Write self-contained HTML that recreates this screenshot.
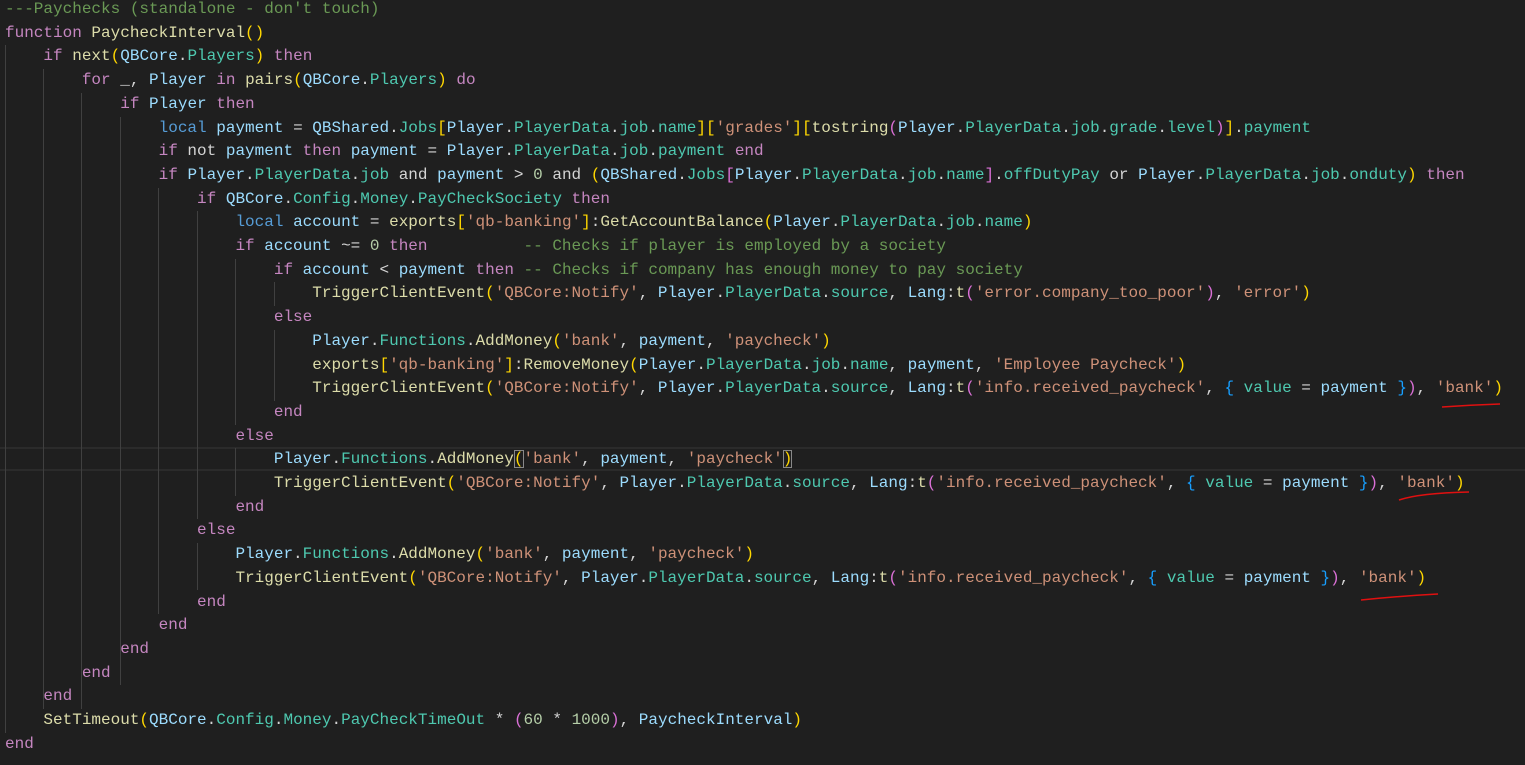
<!DOCTYPE html>
<html><head><meta charset="utf-8"><style>
html,body{margin:0;padding:0;background:#1f1f1f;width:1525px;height:765px;overflow:hidden}
#ed{position:absolute;left:5px;top:-2px;font-family:"Liberation Mono",monospace;font-size:16px;line-height:23.7px;color:#d4d4d4;white-space:pre}
.k{color:#c586c0}.l{color:#569cd6}.f{color:#dcdcaa}.v{color:#9cdcfe}.p{color:#4ec9b0}.s{color:#ce9178}.c{color:#6a9955}.n{color:#b5cea8}
.b1{color:#ffd700}.b2{color:#da70d6}.b3{color:#179fff}
.g{position:absolute;width:1px;background:#404040}
.cur{position:absolute;left:0;width:1525px;height:20px;border-top:2px solid #2b2b2b;border-bottom:2px solid #2b2b2b}
.m{outline:1px solid #888;outline-offset:-1px}
</style></head><body>
<div class="cur" style="top:446.5px"></div>
<div id="ed"><span class="c">---Paychecks (standalone - don't touch)</span>
<span class="k">function</span> <span class="f">PaycheckInterval</span><span class="b1">()</span>
    <span class="k">if</span> <span class="f">next</span><span class="b1">(</span><span class="v">QBCore</span>.<span class="p">Players</span><span class="b1">)</span> <span class="k">then</span>
        <span class="k">for</span> _, <span class="v">Player</span> <span class="k">in</span> <span class="f">pairs</span><span class="b1">(</span><span class="v">QBCore</span>.<span class="p">Players</span><span class="b1">)</span> <span class="k">do</span>
            <span class="k">if</span> <span class="v">Player</span> <span class="k">then</span>
                <span class="l">local</span> <span class="v">payment</span> = <span class="v">QBShared</span>.<span class="p">Jobs</span><span class="b1">[</span><span class="v">Player</span>.<span class="p">PlayerData</span>.<span class="p">job</span>.<span class="p">name</span><span class="b1">][</span><span class="s">'grades'</span><span class="b1">][</span><span class="f">tostring</span><span class="b2">(</span><span class="v">Player</span>.<span class="p">PlayerData</span>.<span class="p">job</span>.<span class="p">grade</span>.<span class="p">level</span><span class="b2">)</span><span class="b1">]</span>.<span class="p">payment</span>
                <span class="k">if</span> not <span class="v">payment</span> <span class="k">then</span> <span class="v">payment</span> = <span class="v">Player</span>.<span class="p">PlayerData</span>.<span class="p">job</span>.<span class="p">payment</span> <span class="k">end</span>
                <span class="k">if</span> <span class="v">Player</span>.<span class="p">PlayerData</span>.<span class="p">job</span> and <span class="v">payment</span> &gt; <span class="n">0</span> and <span class="b1">(</span><span class="v">QBShared</span>.<span class="p">Jobs</span><span class="b2">[</span><span class="v">Player</span>.<span class="p">PlayerData</span>.<span class="p">job</span>.<span class="p">name</span><span class="b2">]</span>.<span class="p">offDutyPay</span> or <span class="v">Player</span>.<span class="p">PlayerData</span>.<span class="p">job</span>.<span class="p">onduty</span><span class="b1">)</span> <span class="k">then</span>
                    <span class="k">if</span> <span class="v">QBCore</span>.<span class="p">Config</span>.<span class="p">Money</span>.<span class="p">PayCheckSociety</span> <span class="k">then</span>
                        <span class="l">local</span> <span class="v">account</span> = <span class="f">exports</span><span class="b1">[</span><span class="s">'qb-banking'</span><span class="b1">]</span>:<span class="f">GetAccountBalance</span><span class="b1">(</span><span class="v">Player</span>.<span class="p">PlayerData</span>.<span class="p">job</span>.<span class="p">name</span><span class="b1">)</span>
                        <span class="k">if</span> <span class="v">account</span> ~= <span class="n">0</span> <span class="k">then</span>          <span class="c">-- Checks if player is employed by a society</span>
                            <span class="k">if</span> <span class="v">account</span> &lt; <span class="v">payment</span> <span class="k">then</span> <span class="c">-- Checks if company has enough money to pay society</span>
                                <span class="f">TriggerClientEvent</span><span class="b1">(</span><span class="s">'QBCore:Notify'</span>, <span class="v">Player</span>.<span class="p">PlayerData</span>.<span class="p">source</span>, <span class="v">Lang</span>:<span class="f">t</span><span class="b2">(</span><span class="s">'error.company_too_poor'</span><span class="b2">)</span>, <span class="s">'error'</span><span class="b1">)</span>
                            <span class="k">else</span>
                                <span class="v">Player</span>.<span class="p">Functions</span>.<span class="f">AddMoney</span><span class="b1">(</span><span class="s">'bank'</span>, <span class="v">payment</span>, <span class="s">'paycheck'</span><span class="b1">)</span>
                                <span class="f">exports</span><span class="b1">[</span><span class="s">'qb-banking'</span><span class="b1">]</span>:<span class="f">RemoveMoney</span><span class="b1">(</span><span class="v">Player</span>.<span class="p">PlayerData</span>.<span class="p">job</span>.<span class="p">name</span>, <span class="v">payment</span>, <span class="s">'Employee Paycheck'</span><span class="b1">)</span>
                                <span class="f">TriggerClientEvent</span><span class="b1">(</span><span class="s">'QBCore:Notify'</span>, <span class="v">Player</span>.<span class="p">PlayerData</span>.<span class="p">source</span>, <span class="v">Lang</span>:<span class="f">t</span><span class="b2">(</span><span class="s">'info.received_paycheck'</span>, <span class="b3">{</span> <span class="p">value</span> = <span class="v">payment</span> <span class="b3">}</span><span class="b2">)</span>, <span class="s">'bank'</span><span class="b1">)</span>
                            <span class="k">end</span>
                        <span class="k">else</span>
                            <span class="v">Player</span>.<span class="p">Functions</span>.<span class="f">AddMoney</span><span class="b1 m">(</span><span class="s">'bank'</span>, <span class="v">payment</span>, <span class="s">'paycheck'</span><span class="b1 m">)</span>
                            <span class="f">TriggerClientEvent</span><span class="b1">(</span><span class="s">'QBCore:Notify'</span>, <span class="v">Player</span>.<span class="p">PlayerData</span>.<span class="p">source</span>, <span class="v">Lang</span>:<span class="f">t</span><span class="b2">(</span><span class="s">'info.received_paycheck'</span>, <span class="b3">{</span> <span class="p">value</span> = <span class="v">payment</span> <span class="b3">}</span><span class="b2">)</span>, <span class="s">'bank'</span><span class="b1">)</span>
                        <span class="k">end</span>
                    <span class="k">else</span>
                        <span class="v">Player</span>.<span class="p">Functions</span>.<span class="f">AddMoney</span><span class="b1">(</span><span class="s">'bank'</span>, <span class="v">payment</span>, <span class="s">'paycheck'</span><span class="b1">)</span>
                        <span class="f">TriggerClientEvent</span><span class="b1">(</span><span class="s">'QBCore:Notify'</span>, <span class="v">Player</span>.<span class="p">PlayerData</span>.<span class="p">source</span>, <span class="v">Lang</span>:<span class="f">t</span><span class="b2">(</span><span class="s">'info.received_paycheck'</span>, <span class="b3">{</span> <span class="p">value</span> = <span class="v">payment</span> <span class="b3">}</span><span class="b2">)</span>, <span class="s">'bank'</span><span class="b1">)</span>
                    <span class="k">end</span>
                <span class="k">end</span>
            <span class="k">end</span>
        <span class="k">end</span>
    <span class="k">end</span>
    <span class="f">SetTimeout</span><span class="b1">(</span><span class="v">QBCore</span>.<span class="p">Config</span>.<span class="p">Money</span>.<span class="p">PayCheckTimeOut</span> * <span class="b2">(</span><span class="n">60</span> * <span class="n">1000</span><span class="b2">)</span>, <span class="v">PaycheckInterval</span><span class="b1">)</span>
<span class="k">end</span></div>
<div class="g" style="left:5px;top:45.4px;height:687.3px"></div>
<div class="g" style="left:43px;top:69.1px;height:640px"></div>
<div class="g" style="left:81px;top:92.8px;height:616.2px"></div>
<div class="g" style="left:120px;top:116.5px;height:568.8px"></div>
<div class="g" style="left:158px;top:187.6px;height:426.6px"></div>
<div class="g" style="left:197px;top:211.3px;height:308.1px"></div>
<div class="g" style="left:197px;top:543.1px;height:47.4px"></div>
<div class="g" style="left:235px;top:258.7px;height:165.9px"></div>
<div class="g" style="left:235px;top:448.3px;height:47.4px"></div>
<div class="g" style="left:274px;top:282.4px;height:23.7px"></div>
<div class="g" style="left:274px;top:329.8px;height:71.1px"></div>
<svg style="position:absolute;left:0;top:0" width="1525" height="765">
<path d="M1442 407 Q1470 405 1500 404" stroke="#e01010" stroke-width="1.5" fill="none"/>
<path d="M1399 500 Q1420 493 1469 492" stroke="#e01010" stroke-width="1.5" fill="none"/>
<path d="M1361 600 Q1400 596 1438 594" stroke="#e01010" stroke-width="1.5" fill="none"/>
</svg>
</body></html>
